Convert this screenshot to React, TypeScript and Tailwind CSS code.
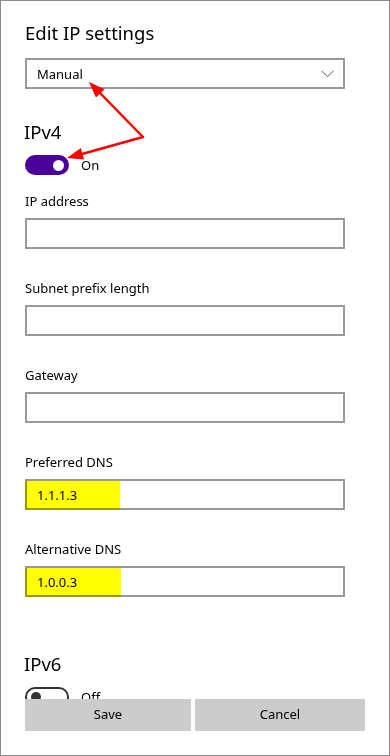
import React from "react";

const font = { fontFamily: '"Noto Sans", "Segoe UI", sans-serif' };

function Field({ label, value, hl }: { label: string; value?: string; hl?: number }) {
  return (
    <div className="flex flex-col">
      <div className="text-[13px] leading-[18px] text-black">{label}</div>
      <div className="relative mt-[8px] h-[31px] w-[320px] border-2 border-[#999999] bg-white flex items-center">
        {value !== undefined && (
          <div
            className="absolute left-[-2px] top-0 bottom-[-2px] bg-[#ffff00] mix-blend-multiply"
            style={{ width: hl }}
          />
        )}
        {value !== undefined && (
          <span className="relative pl-[10px] text-[13px] leading-[18px] text-black">{value}</span>
        )}
      </div>
    </div>
  );
}

export default function App() {
  return (
    <div
      className="relative w-[390px] h-[756px] border border-[#8a8a8a] bg-white flex flex-col overflow-hidden"
      style={font}
    >
      <div className="h-[698px] shrink-0 overflow-hidden pl-[24px]">
        <div className="mt-[18px] text-[18.5px] leading-[28px] text-black">Edit IP settings</div>
        <div className="mt-[11px] h-[31px] w-[320px] border-2 border-[#999999] flex items-center justify-between pl-[10px] pr-[9px]">
          <span className="text-[13px] leading-[18px] text-black">Manual</span>
          <svg width="13" height="8" viewBox="0 0 13 8" fill="none">
            <path d="M0.5 0.8 L6.5 6.8 L12.5 0.8" stroke="#555" strokeWidth="1" />
          </svg>
        </div>

        <div className="mt-[29px] text-[18.5px] leading-[28px] text-black -ml-[1px]">IPv4</div>
        <div className="mt-[9px] flex items-center gap-[12px]">
          <div className="w-[44px] h-[20px] rounded-full bg-[#4a0099] flex items-center justify-end pr-[5px]">
            <div className="w-[11px] h-[11px] rounded-full bg-white" />
          </div>
          <span className="text-[13px] leading-[18px] text-black">On</span>
        </div>

        <div className="mt-[17px] flex flex-col gap-[30px]">
          <Field label="IP address" />
          <Field label="Subnet prefix length" />
          <Field label="Gateway" />
          <Field label="Preferred DNS" value="1.1.1.3" hl={95} />
          <Field label="Alternative DNS" value="1.0.0.3" hl={96} />
        </div>

        <div className="mt-[53px] text-[18.5px] leading-[28px] text-black -ml-[1px]">IPv6</div>
        <div className="mt-[9px] flex items-center gap-[12px]">
          <div className="w-[44px] h-[20px] rounded-full border-2 border-[#333333] flex items-center pl-[4px]">
            <div className="w-[10px] h-[10px] rounded-full bg-[#333333]" />
          </div>
          <span className="text-[13px] leading-[18px] text-black">Off</span>
        </div>
      </div>

      <div className="flex shrink-0 gap-[4px] pl-[24px]">
        <button className="w-[166px] h-[32px] bg-[#cccccc] text-[13px] text-black">Save</button>
        <button className="w-[170px] h-[32px] bg-[#cccccc] text-[13px] text-black">Cancel</button>
      </div>

      <svg
        className="absolute left-[-1px] top-[-1px] pointer-events-none"
        width="390"
        height="756"
        viewBox="0 0 390 756"
      >
        <path d="M143 137 L99 92 M143 137 L82 154" stroke="#ff0000" strokeWidth="2.5" fill="none" strokeLinecap="round" />
        <polygon points="89,82 104.5,89.2 95.9,97.6" fill="#ff0000" />
        <polygon points="67,158 84,159.5 80.8,147.9" fill="#ff0000" />
      </svg>
    </div>
  );
}
